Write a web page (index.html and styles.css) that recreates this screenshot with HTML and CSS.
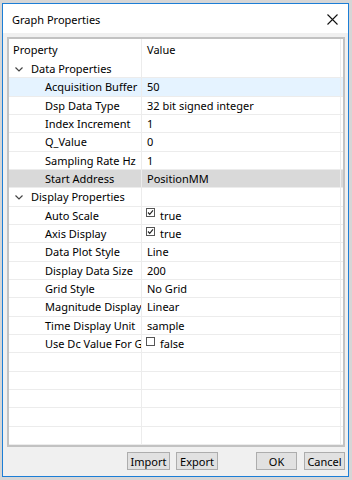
FILE: index.html
```html
<!DOCTYPE html>
<html>
<head>
<meta charset="utf-8">
<link rel="stylesheet" href="styles.css">
</head>
<body>
<div class="window">
  <div class="titlebar">
    <span class="title">Graph Properties</span>
    <svg class="close" width="11" height="11" viewBox="0 0 11 11"><path d="M0.5 0.5 L10.5 10.5 M10.5 0.5 L0.5 10.5" stroke="#111" stroke-width="1.1" fill="none"/></svg>
  </div>
  <div class="content">
    <div class="grid">
      <div class="row header"><div class="name">Property</div><div class="value">Value</div></div>
      <div class="row cat"><div class="name"><svg class="chev" width="8" height="5" viewBox="0 0 8 5"><path d="M0.5 0.5 L4 4 L7.5 0.5" stroke="#444" stroke-width="1.2" fill="none"/></svg>Data Properties</div><div class="value"></div></div>
      <div class="row hover"><div class="name">Acquisition Buffer</div><div class="value">50</div></div>
      <div class="row"><div class="name">Dsp Data Type</div><div class="value">32 bit signed integer</div></div>
      <div class="row"><div class="name">Index Increment</div><div class="value">1</div></div>
      <div class="row"><div class="name">Q_Value</div><div class="value">0</div></div>
      <div class="row"><div class="name">Sampling Rate Hz</div><div class="value">1</div></div>
      <div class="row selected"><div class="name">Start Address</div><div class="value">PositionMM</div></div>
      <div class="row cat"><div class="name"><svg class="chev" width="8" height="5" viewBox="0 0 8 5"><path d="M0.5 0.5 L4 4 L7.5 0.5" stroke="#444" stroke-width="1.2" fill="none"/></svg>Display Properties</div><div class="value"></div></div>
      <div class="row"><div class="name">Auto Scale</div><div class="value"><svg class="cb" width="9" height="9" viewBox="0 0 9 9"><rect x="0.5" y="0.5" width="8" height="8" fill="#fff" stroke="#555"/><path d="M2 4.5 L3.7 6.3 L7 2.3" stroke="#222" stroke-width="1.1" fill="none"/></svg>true</div></div>
      <div class="row"><div class="name">Axis Display</div><div class="value"><svg class="cb" width="9" height="9" viewBox="0 0 9 9"><rect x="0.5" y="0.5" width="8" height="8" fill="#fff" stroke="#555"/><path d="M2 4.5 L3.7 6.3 L7 2.3" stroke="#222" stroke-width="1.1" fill="none"/></svg>true</div></div>
      <div class="row"><div class="name">Data Plot Style</div><div class="value">Line</div></div>
      <div class="row"><div class="name">Display Data Size</div><div class="value">200</div></div>
      <div class="row"><div class="name">Grid Style</div><div class="value">No Grid</div></div>
      <div class="row"><div class="name">Magnitude Display</div><div class="value">Linear</div></div>
      <div class="row"><div class="name">Time Display Unit</div><div class="value">sample</div></div>
      <div class="row"><div class="name">Use Dc Value For Graph</div><div class="value"><svg class="cb" width="9" height="9" viewBox="0 0 9 9"><rect x="0.5" y="0.5" width="8" height="8" fill="#fff" stroke="#555"/></svg>false</div></div>
      <div class="row"><div class="name"></div><div class="value"></div></div>
      <div class="row"><div class="name"></div><div class="value"></div></div>
      <div class="row"><div class="name"></div><div class="value"></div></div>
      <div class="row"><div class="name"></div><div class="value"></div></div>
      <div class="row"><div class="name"></div><div class="value"></div></div>
      <div class="row"><div class="name"></div><div class="value"></div></div>
    </div>
    <div class="buttons">
      <button class="btn import">Import</button>
      <button class="btn export">Export</button>
      <button class="btn ok">OK</button>
      <button class="btn cancel">Cancel</button>
    </div>
  </div>
</div>
</body>
</html>
```
FILE: styles.css
```css
html, body {
  margin: 0;
  padding: 0;
}
body {
  width: 352px;
  height: 480px;
  overflow: hidden;
  background: #d6d6d6;
  font-family: "Noto Sans", "Open Sans", sans-serif;
  font-size: 11px;
  color: #000;
}
.window {
  margin: 3px 0 0 2px;
  width: 347px;
  height: 474px;
  box-sizing: border-box;
  border: 1px solid #1c7ed6;
  background: #f0f0f0;
  display: flex;
  flex-direction: column;
}
.titlebar {
  height: 29px;
  background: #fff;
  display: flex;
  align-items: center;
  justify-content: space-between;
  padding: 0 10px 0 9px;
  flex: none;
}
.title {
  font-size: 11px;
  line-height: 14px;
  margin-top: 2px;
}
.close {
  display: block;
  margin-top: 1px;
}
.content {
  flex: 1;
  display: flex;
  flex-direction: column;
  padding: 4px 3px 0 4px;
}
.grid {
  height: 406px;
  border: 2px solid #c2c2c2;
  background: #fff;
  overflow: hidden;
  flex: none;
}
.row {
  display: flex;
  height: 18.333px;
  box-sizing: border-box;
  border-bottom: 1px solid #ececec;
  line-height: 17px;
  white-space: nowrap;
}
.row.header {
  height: 21px;
  border-bottom: none;
  line-height: 21px;
}
.row.cat .name {
  padding-left: 6px;
}
.row.hover {
  background: #e5f3ff;
}
.row.selected {
  background: #d9d9d9;
}
.name {
  width: 133px;
  flex: none;
  box-sizing: border-box;
  padding-left: 36px;
  border-right: 1px solid #ececec;
  overflow: hidden;
  display: flex;
  align-items: center;
}
.row.header .name {
  padding-left: 4px;
}
.value {
  flex: 1;
  margin-right: 2px;
  padding-left: 5px;
  border-right: 1px solid #ececec;
  display: flex;
  align-items: center;
  overflow: hidden;
}
.chev {
  display: block;
  margin: 1px 8px 0 0;
}
.cb {
  display: block;
  margin: -5px 5px 0 -1px;
}
.buttons {
  display: flex;
  justify-content: flex-end;
  margin-top: 5px;
}
.btn {
  height: 18px;
  box-sizing: border-box;
  padding: 0;
  border: 1px solid #adadad;
  background: #e1e1e1;
  font-family: "Noto Sans", "Open Sans", sans-serif;
  font-size: 11px;
  line-height: 15px;
  color: #000;
}
.import { width: 43px; }
.export { width: 42px; margin-left: 6px; }
.ok { width: 41px; margin-left: 38px; }
.cancel { width: 41px; margin-left: 7px; }
```
